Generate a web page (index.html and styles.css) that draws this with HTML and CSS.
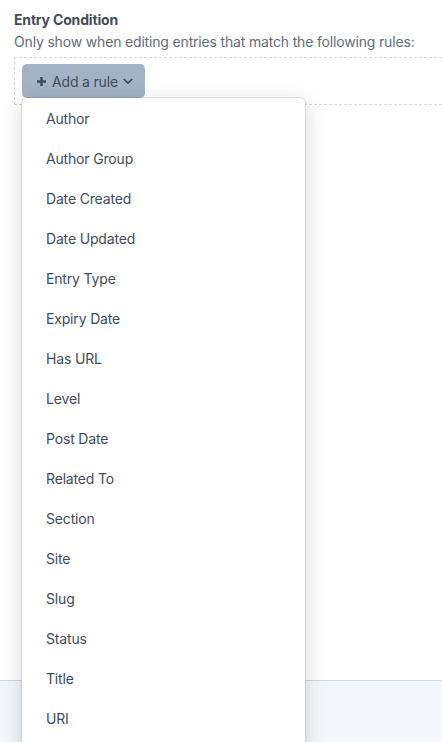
FILE: index.html
```html
<!DOCTYPE html>
<html>
<head>
<meta charset="utf-8">
<link rel="stylesheet" href="styles.css">
</head>
<body>
<div class="page">
  <div class="content">
    <div class="field">
      <div class="heading">Entry Condition</div>
      <div class="instructions">Only show when editing entries that match the following rules:</div>
      <div class="condition-box">
        <div class="add-wrap">
          <button class="add-btn"><svg class="plus" width="11" height="11" viewBox="0 0 11 11"><path d="M5.5 1v9M1 5.5h9" stroke="#3f4d5a" stroke-width="2.4"/></svg><span>Add a rule</span><svg class="chev" width="10" height="7" viewBox="0 0 10 7"><path d="M1.2 1.5l3.8 3.6 3.8-3.6" fill="none" stroke="#3f4d5a" stroke-width="1.7" stroke-linecap="round" stroke-linejoin="round"/></svg></button>
          <ul class="menu">
            <li>Author</li>
            <li>Author Group</li>
            <li>Date Created</li>
            <li>Date Updated</li>
            <li>Entry Type</li>
            <li>Expiry Date</li>
            <li>Has URL</li>
            <li>Level</li>
            <li>Post Date</li>
            <li>Related To</li>
            <li>Section</li>
            <li>Site</li>
            <li>Slug</li>
            <li>Status</li>
            <li>Title</li>
            <li>URI</li>
          </ul>
        </div>
      </div>
    </div>
  </div>
  <div class="footer"></div>
</div>
</body>
</html>
```
FILE: styles.css
```css
html, body {
  margin: 0;
  padding: 0;
  height: 100%;
  overflow: hidden;
}
body {
  font-family: Inter, "Noto Sans", "Liberation Sans", sans-serif;
  font-size: 14px;
  letter-spacing: -0.17px;
  color: #3f4d5a;
  background: #fff;
}
.page {
  display: flex;
  flex-direction: column;
  height: 100vh;
}
.content {
  flex: 1;
  padding: 10px 0 0 14px;
}
.heading {
  font-weight: 700;
  line-height: 20px;
  color: #3f4d5a;
}
.instructions {
  color: #606d7b;
  line-height: 20px;
  margin-top: 2px;
}
.condition-box {
  margin-top: 5px;
  border: 1px dashed #d3d8de;
  border-right: none;
  padding: 6px 0 6px 7px;
}
.add-wrap {
  position: relative;
  width: max-content;
}
.add-btn {
  display: flex;
  align-items: center;
  gap: 5px;
  height: 34px;
  padding: 0 12px 0 14px;
  border: none;
  border-radius: 5px;
  background: #a4b2c5;
  color: #3f4d5a;
  font: inherit;
  font-size: 14px;
  letter-spacing: -0.17px;
}
.chev { margin-top: 1px; }
.menu {
  position: absolute;
  top: 34px;
  left: 0;
  width: 283px;
  margin: 0;
  padding: 1px 0 20px;
  list-style: none;
  background: #fff;
  border-radius: 5px;
  box-shadow: 0 0 0 1px rgba(31, 41, 51, 0.1), 0 5px 20px rgba(31, 41, 51, 0.2);
  z-index: 10;
}
.menu li {
  height: 40px;
  line-height: 40px;
  padding-left: 24px;
  color: #3f4d5a;
}
.footer {
  height: 61px;
  border-top: 1px solid #cdd8e4;
  background: #f3f7fc;
}
```
